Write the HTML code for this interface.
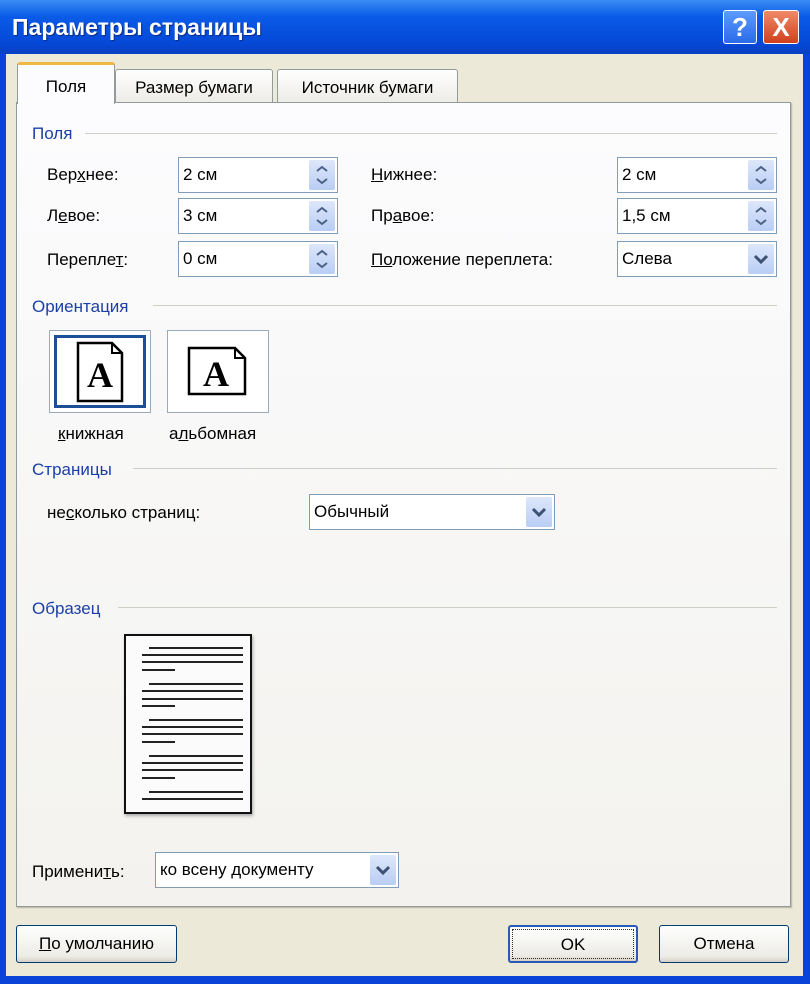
<!DOCTYPE html>
<html><head><meta charset="utf-8"><style>
*{margin:0;padding:0;box-sizing:border-box}
body{width:810px;height:984px;overflow:hidden;background:#0a43d8;font-family:"Liberation Sans","DejaVu Sans",sans-serif;font-size:17px;color:#000;position:relative}
.a{position:absolute}
#title{left:0;top:0;width:810px;height:54px;background:linear-gradient(#3a8cf5,#0a5ce8 30%,#0548d8 80%,#0a3fc0);}
#title span{position:absolute;left:12px;top:14px;color:#fff;font-size:23px;font-weight:bold;text-shadow:1px 1px 1px #0a2a80}
#body{left:6px;top:54px;width:797px;height:922px;background:#ece9d8}
#panel{left:16px;top:102px;width:775px;height:805px;background:linear-gradient(#fcfcfe,#f3f2ee);border:1px solid #919b9c;box-shadow:1px 1px 1px #b8b4a4}
.tab{background:linear-gradient(#fff,#ecebe6);border:1px solid #919b9c;border-bottom:none;border-radius:3px 3px 0 0;text-align:center;padding-top:8px;font-size:17px}
.sec{color:#1a3fa8;font-size:17px}
.line{height:1px;background:#d0d0c8}
.inp{background:#fff;border:1px solid #7f9db9;height:36px;padding:7px 4px;font-size:17px}
.spin,.dd{position:absolute;right:2px;top:2px;width:26px;height:30px;background:linear-gradient(#dde7fb,#b9cdf4);border-radius:2px}
.spin svg,.dd svg{position:absolute;left:0;top:0}
.btn{background:linear-gradient(#fff,#ecebe6 85%,#d6d0c5);border:1px solid #003c74;border-radius:3px;text-align:center;font-size:17px;line-height:36px}
.pl{position:absolute;height:2px;background:#222}
u{text-decoration:underline}
</style></head><body>
<div id="title" class="a"><span>Параметры страницы</span>
<div class="a" style="left:723px;top:10px;width:34px;height:34px;border:1px solid #fff;border-radius:3px;background:linear-gradient(#5d9bff,#2a6ae8);color:#fff;font-size:26px;text-align:center;line-height:32px;font-weight:bold">?</div>
<div class="a" style="left:763px;top:10px;width:36px;height:34px;border:1px solid #fff;border-radius:3px;background:linear-gradient(#f08a6a,#d0411c);color:#fff;font-size:26px;text-align:center;line-height:32px;font-weight:bold">X</div>
</div>
<div id="body" class="a"></div>
<div class="a tab" style="left:115px;top:69px;width:158px;height:34px">Размер бумаги</div>
<div class="a tab" style="left:277px;top:69px;width:181px;height:34px">Источник бумаги</div>
<div id="panel" class="a"></div>
<div class="a tab" style="left:17px;top:62px;width:98px;height:42px;background:#fcfcfe;border-top:3px solid #f0b840;padding-top:12px">Поля</div>

<div class="a sec" style="left:32px;top:124px">Поля</div><div class="a line" style="left:85px;top:133px;width:692px"></div>
<div class="a" style="left:47px;top:165px">Вер<u>х</u>нее:</div>
<div class="a" style="left:47px;top:206px">Л<u>е</u>вое:</div>
<div class="a" style="left:47px;top:250px">Перепле<u>т</u>:</div>
<div class="a inp" style="left:178px;top:157px;width:160px">2 см<div class="spin"><svg width="26" height="30"><path d="M8 11l5-4 5 4M8 19l5 4 5-4" fill="none" stroke="#4d6185" stroke-width="2"/></svg></div></div>
<div class="a inp" style="left:178px;top:198px;width:160px">3 см<div class="spin"><svg width="26" height="30"><path d="M8 11l5-4 5 4M8 19l5 4 5-4" fill="none" stroke="#4d6185" stroke-width="2"/></svg></div></div>
<div class="a inp" style="left:178px;top:241px;width:160px">0 см<div class="spin"><svg width="26" height="30"><path d="M8 11l5-4 5 4M8 19l5 4 5-4" fill="none" stroke="#4d6185" stroke-width="2"/></svg></div></div>
<div class="a" style="left:371px;top:165px"><u>Н</u>ижнее:</div>
<div class="a" style="left:371px;top:206px">Пр<u>а</u>вое:</div>
<div class="a" style="left:371px;top:250px"><u>По</u>ложение переплета:</div>
<div class="a inp" style="left:617px;top:157px;width:160px">2 см<div class="spin"><svg width="26" height="30"><path d="M8 11l5-4 5 4M8 19l5 4 5-4" fill="none" stroke="#4d6185" stroke-width="2"/></svg></div></div>
<div class="a inp" style="left:617px;top:198px;width:160px">1,5 см<div class="spin"><svg width="26" height="30"><path d="M8 11l5-4 5 4M8 19l5 4 5-4" fill="none" stroke="#4d6185" stroke-width="2"/></svg></div></div>
<div class="a inp" style="left:617px;top:241px;width:160px">Слева<div class="dd"><svg width="26" height="30"><path d="M7 12l6 6 6-6" fill="none" stroke="#3d5175" stroke-width="3"/></svg></div></div>

<div class="a sec" style="left:32px;top:297px">Ориентация</div><div class="a line" style="left:153px;top:305px;width:624px"></div>
<div class="a" style="left:49px;top:330px;width:102px;height:83px;background:#fff;border:1px solid #9ab"></div>
<div class="a" style="left:54px;top:335px;width:92px;height:73px;border:3px solid #1d4f99"></div>
<svg class="a" style="left:76px;top:341px" width="50" height="62"><path d="M2 2h34l10 10v48H2z" fill="#fff" stroke="#000" stroke-width="2.5"/><path d="M36 2v10h10" fill="none" stroke="#000" stroke-width="2"/><text x="24" y="46" text-anchor="middle" font-family="Liberation Serif,serif" font-weight="bold" font-size="36">A</text></svg>
<div class="a" style="left:167px;top:330px;width:102px;height:83px;background:#fff;border:1px solid #9ab"></div>
<svg class="a" style="left:187px;top:346px" width="60" height="50"><path d="M2 2h46l10 10v36H2z" fill="#fff" stroke="#000" stroke-width="2.5"/><path d="M48 2v10h10" fill="none" stroke="#000" stroke-width="2"/><text x="29" y="40" text-anchor="middle" font-family="Liberation Serif,serif" font-weight="bold" font-size="36">A</text></svg>
<div class="a" style="left:58px;top:424px"><u>к</u>нижная</div>
<div class="a" style="left:169px;top:424px">а<u>л</u>ьбомная</div>

<div class="a sec" style="left:32px;top:460px">Страницы</div><div class="a line" style="left:133px;top:468px;width:644px"></div>
<div class="a" style="left:47px;top:503px">не<u>с</u>колько страниц:</div>
<div class="a inp" style="left:309px;top:494px;width:246px">Обычный<div class="dd"><svg width="26" height="30"><path d="M7 12l6 6 6-6" fill="none" stroke="#3d5175" stroke-width="3"/></svg></div></div>

<div class="a sec" style="left:32px;top:599px">Образец</div><div class="a line" style="left:118px;top:607px;width:659px"></div>
<div class="a" style="left:124px;top:634px;width:128px;height:180px;background:#fbfbfb;border:2px solid #111;box-shadow:1px 2px 3px #aaa"></div>
<div class="pl" style="left:149px;top:647px;width:94px"></div><div class="pl" style="left:142px;top:654px;width:101px"></div><div class="pl" style="left:142px;top:661px;width:101px"></div><div class="pl" style="left:142px;top:669px;width:33px"></div>
<div class="pl" style="left:149px;top:683px;width:94px"></div><div class="pl" style="left:142px;top:690px;width:101px"></div><div class="pl" style="left:142px;top:698px;width:101px"></div><div class="pl" style="left:142px;top:705px;width:33px"></div>
<div class="pl" style="left:149px;top:719px;width:94px"></div><div class="pl" style="left:142px;top:726px;width:101px"></div><div class="pl" style="left:142px;top:733px;width:101px"></div><div class="pl" style="left:142px;top:741px;width:33px"></div>
<div class="pl" style="left:149px;top:755px;width:94px"></div><div class="pl" style="left:142px;top:762px;width:101px"></div><div class="pl" style="left:142px;top:769px;width:101px"></div><div class="pl" style="left:142px;top:777px;width:33px"></div>
<div class="pl" style="left:149px;top:791px;width:94px"></div><div class="pl" style="left:142px;top:798px;width:101px"></div>

<div class="a" style="left:32px;top:862px">Примени<u>т</u>ь:</div>
<div class="a inp" style="left:155px;top:852px;width:244px">ко всену документу<div class="dd"><svg width="26" height="30"><path d="M7 12l6 6 6-6" fill="none" stroke="#3d5175" stroke-width="3"/></svg></div></div>

<div class="a btn" style="left:16px;top:925px;width:161px;height:38px"><u>П</u>о умолчанию</div>
<div class="a btn" style="left:508px;top:925px;width:130px;height:38px;border:2px solid #2a5ab8;outline:1px dotted #333;outline-offset:-5px">OK</div>
<div class="a btn" style="left:659px;top:925px;width:130px;height:38px">Отмена</div>
</body></html>
